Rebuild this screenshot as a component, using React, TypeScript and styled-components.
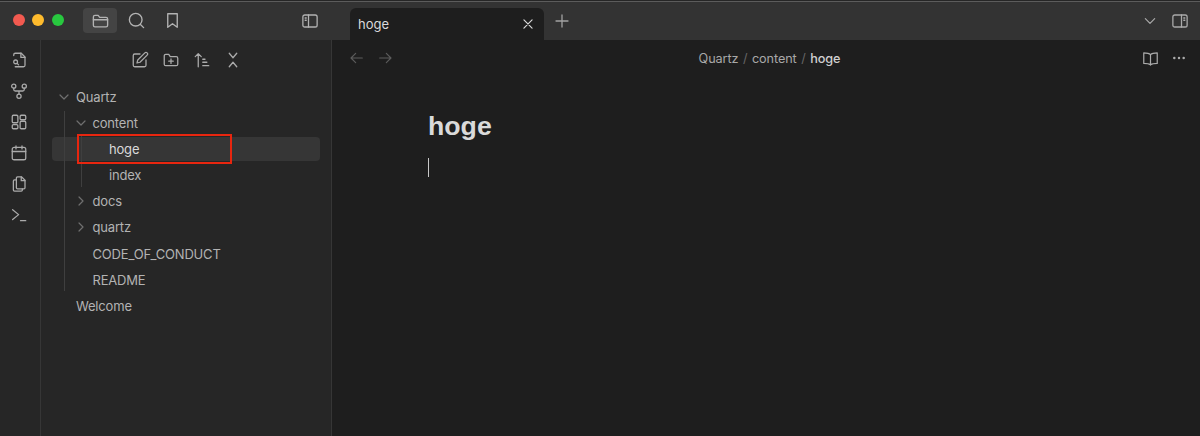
import styled, { createGlobalStyle } from 'styled-components'
import type { ReactNode } from 'react'

const GlobalStyle = createGlobalStyle`
  html, body {
    margin: 0;
    padding: 0;
    background: #1e1e1e;
  }
  * {
    box-sizing: border-box;
  }
`

const Icon = ({ size = 18, children }: { size?: number; children: ReactNode }) => (
  <svg
    width={size}
    height={size}
    viewBox="0 0 24 24"
    fill="none"
    stroke="currentColor"
    strokeWidth={size > 14 ? 1.7 : 2}
    strokeLinecap="round"
    strokeLinejoin="round"
  >
    {children}
  </svg>
)

const Chevron = ({ open }: { open: boolean }) => (
  <svg width="12" height="12" viewBox="0 0 12 12" fill="none" stroke="#6f6f6f" strokeWidth="1.2" strokeLinecap="round" strokeLinejoin="round">
    {open ? <path d="M2 4l4 4 4-4" /> : <path d="M4 2l4 4-4 4" />}
  </svg>
)

const Window = styled.div`
  width: 1200px;
  height: 436px;
  display: flex;
  flex-direction: column;
  overflow: hidden;
  background: #1e1e1e;
  font-family: Inter, "Liberation Sans", sans-serif;
`

const TitleBar = styled.header`
  height: 40px;
  flex: none;
  display: flex;
  align-items: flex-end;
  background: #333333;
  border-top: 1px solid #262626;
  box-shadow: inset 0 1px 0 #5c5c5c;
`

const TrafficLights = styled.div`
  display: flex;
  gap: 7.5px;
  padding: 0 0 14px 12.5px;
  align-self: flex-end;
`

const Light = styled.span<{ $color: string }>`
  width: 12px;
  height: 12px;
  border-radius: 50%;
  background: ${p => p.$color};
`

const TitleTools = styled.div`
  display: flex;
  align-items: center;
  gap: 2px;
  margin-left: 19.5px;
  padding-bottom: 7px;
`

const ToolButton = styled.div<{ $active?: boolean }>`
  width: 34px;
  height: 25px;
  display: flex;
  align-items: center;
  justify-content: center;
  border-radius: 4px;
  color: #b3b3b3;
  background: ${p => (p.$active ? '#444444' : 'transparent')};
`

const LayoutToggle = styled(ToolButton)`
  margin-left: 104px;
  margin-bottom: 7px;
`

const Tab = styled.div`
  width: 194px;
  height: 32px;
  margin-left: 23px;
  padding: 0 9px 0 8px;
  display: flex;
  align-items: center;
  justify-content: space-between;
  background: #1e1e1e;
  border-radius: 6px 6px 0 0;
  color: #dadada;
  font-size: 13px;
`

const TabClose = styled.span`
  display: flex;
  color: #dadada;
`

const NewTab = styled.div`
  width: 18px;
  height: 18px;
  margin: 0 0 10px 9px;
  color: #a3a3a3;
`

const TitleRight = styled.div`
  margin-left: auto;
  display: flex;
  align-items: center;
  gap: 14px;
  padding: 0 11px 10px 0;
  color: #ababab;
`

const Body = styled.div`
  flex: 1;
  display: flex;
  min-height: 0;
`

const Ribbon = styled.nav`
  width: 41px;
  flex: none;
  display: flex;
  flex-direction: column;
  align-items: center;
  gap: 13px;
  padding: 11px 2px 0 0;
  background: #262626;
  border-right: 1px solid #363636;
  color: #ababab;
`

const Sidebar = styled.aside`
  width: 291px;
  flex: none;
  position: relative;
  background: #262626;
  border-right: 1px solid #363636;
`

const SideTools = styled.div`
  height: 40px;
  padding-left: 90px;
  display: flex;
  align-items: center;
  gap: 13px;
  color: #ababab;
`

const Tree = styled.div`
  padding: 4.5px 11px 0 11px;
  position: relative;
`

const Row = styled.div<{ $depth: number; $selected?: boolean }>`
  height: 24px;
  margin-bottom: 2.2px;
  display: flex;
  align-items: center;
  gap: 6px;
  padding-left: ${p => 6 + p.$depth * 16.5}px;
  border-radius: 4px;
  font-size: 13px;
  letter-spacing: -0.18px;
  color: ${p => (p.$selected ? '#dadada' : '#b3b3b3')};
  background: ${p => (p.$selected ? '#363636' : 'transparent')};
`

const ChevronSlot = styled.span`
  width: 12px;
  flex: none;
  display: flex;
`

const Guide = styled.span<{ $left: number; $top: number; $height: number }>`
  position: absolute;
  left: ${p => p.$left}px;
  top: ${p => p.$top}px;
  width: 1px;
  height: ${p => p.$height}px;
  background: #3f3f3f;
`

const Highlight = styled.div`
  position: absolute;
  left: 36px;
  top: 94px;
  width: 155px;
  height: 30px;
  border: 2px solid #e8260f;
`

const Main = styled.main`
  flex: 1;
  display: flex;
  flex-direction: column;
  background: #1e1e1e;
`

const ViewHeader = styled.div`
  height: 36px;
  flex: none;
  display: flex;
  align-items: center;
  justify-content: space-between;
  padding: 0 13px 0 17px;
`

const NavArrows = styled.div`
  display: flex;
  gap: 12px;
  color: #5c5c5c;
`

const Crumbs = styled.div`
  display: flex;
  gap: 4.5px;
  margin-left: 4px;
  font-size: 12.7px;
  letter-spacing: -0.1px;
  color: #a8a8a8;
`

const CrumbSep = styled.span`
  color: #666666;
`

const CrumbCurrent = styled.span`
  color: #d0d0d0;
  font-weight: 500;
`

const ViewActions = styled.div`
  display: flex;
  align-items: center;
  gap: 12px;
  color: #ababab;
`

const Editor = styled.div`
  padding: 33px 0 0 96px;
`

const NoteTitle = styled.h1`
  margin: 0;
  font-family: "Liberation Sans", Arial, sans-serif;
  font-size: 26.7px;
  line-height: 34px;
  font-weight: 700;
  color: #dadada;
`

const Caret = styled.div`
  width: 1px;
  height: 19px;
  margin-top: 15px;
  background: #c8c8c8;
`

const PanelIcon = ({ right }: { right?: boolean }) => (
  <Icon size={18}>
    <rect x="2.5" y="4" width="19" height="16" rx="2.5" />
    <path d={right ? 'M14 4v16' : 'M10 4v16'} />
    {right ? <path d="M17 8h1.5M17 11h1.5" /> : <path d="M5.5 8h1.5M5.5 11h1.5" />}
  </Icon>
)

const App = () => (
  <>
    <GlobalStyle />
    <Window>
      <TitleBar>
        <TrafficLights>
          <Light $color="#f25a50" />
          <Light $color="#febb2d" />
          <Light $color="#28c83f" />
        </TrafficLights>
        <TitleTools>
          <ToolButton $active>
            <Icon size={19}>
              <path d="M3 7.5A2 2 0 0 1 5 5.5h4l2 2.5h8a2 2 0 0 1 2 2v8a2 2 0 0 1-2 2H5a2 2 0 0 1-2-2z" />
              <path d="M3 11h18" />
            </Icon>
          </ToolButton>
          <ToolButton>
            <Icon size={19}>
              <circle cx="11" cy="11" r="8" />
              <path d="M21 21l-4-4" />
            </Icon>
          </ToolButton>
          <ToolButton>
            <Icon size={19}>
              <path d="M6 3.5h12v17l-6-4.5-6 4.5z" />
            </Icon>
          </ToolButton>
        </TitleTools>
        <LayoutToggle>
          <PanelIcon />
        </LayoutToggle>
        <Tab>
          hoge
          <TabClose>
            <Icon size={14}>
              <path d="M5 5l14 14M19 5L5 19" />
            </Icon>
          </TabClose>
        </Tab>
        <NewTab>
          <Icon size={18}>
            <path d="M12 4v16M4 12h16" />
          </Icon>
        </NewTab>
        <TitleRight>
          <Icon size={14}>
            <path d="M4 8l8 8 8-8" />
          </Icon>
          <PanelIcon right />
        </TitleRight>
      </TitleBar>
      <Body>
        <Ribbon>
          <Icon size={18}>
            <path d="M5 6V5a2 2 0 0 1 2-2h8l5 5v11a2 2 0 0 1-2 2H7" />
            <path d="M14.500 3v5.500H20" />
            <circle cx="7.500" cy="14.500" r="2.500" />
            <path d="M9.500 16.500l2 2" />
          </Icon>
          <Icon size={18}>
            <circle cx="5" cy="5.500" r="2.800" />
            <circle cx="19" cy="5.500" r="2.800" />
            <circle cx="12" cy="19" r="2.800" />
            <path d="M5 8.300V10a2 2 0 0 0 2 2h10a2 2 0 0 0 2-2V8.300M12 12v4.200" />
          </Icon>
          <Icon size={18}>
            <rect x="3" y="3" width="7.500" height="10" rx="1.500" />
            <rect x="13.500" y="3" width="7.500" height="6" rx="1.500" />
            <rect x="13.500" y="11" width="7.500" height="10" rx="1.500" />
            <rect x="3" y="15.500" width="7.500" height="5.500" rx="1.500" />
          </Icon>
          <Icon size={18}>
            <rect x="3" y="4.500" width="18" height="16.500" rx="2.500" />
            <path d="M3 10h18M8 2.500v4M16 2.500v4" />
          </Icon>
          <Icon size={18}>
            <path d="M10 2.500h5.500L20 7v10a1.500 1.500 0 0 1-1.500 1.500H10A1.500 1.500 0 0 1 8.500 17V4A1.500 1.500 0 0 1 10 2.500z" />
            <path d="M15 2.500V7.500h5" />
            <path d="M8.500 6.500H6A1.500 1.500 0 0 0 4.500 8v12A1.500 1.500 0 0 0 6 21.500h9a1.500 1.500 0 0 0 1.500-1.500v-1.500" />
          </Icon>
          <Icon size={18}>
            <path d="M3.500 5l8 6.500-8 6.500M14 19.500h7" />
          </Icon>
        </Ribbon>
        <Sidebar>
          <SideTools>
            <Icon size={18}>
              <path d="M12 4H5a2 2 0 0 0-2 2v13a2 2 0 0 0 2 2h13a2 2 0 0 0 2-2v-7" />
              <path d="M18.500 2.500a2.100 2.100 0 0 1 3 3L12 15l-4 1 1-4z" />
            </Icon>
            <Icon size={18}>
              <path d="M3 6.500A2 2 0 0 1 5 4.500h4l2 3h8a2 2 0 0 1 2 2v8a2 2 0 0 1-2 2H5a2 2 0 0 1-2-2z" />
              <path d="M12 10.500v6M9 13.500h6" />
            </Icon>
            <Icon size={18}>
              <path d="M7 21V3.500M3 7.500l4-4 4 4M13 11h3M13 15h5.500M13 19.500h8" />
            </Icon>
            <Icon size={18}>
              <path d="M7 3l5 6 5-6M7 21l5-6 5 6" />
            </Icon>
          </SideTools>
          <Tree>
            <Guide $left={23} $top={31} $height={180} />
            <Guide $left={40} $top={55} $height={52} />
            <Row $depth={0}>
              <ChevronSlot><Chevron open /></ChevronSlot>
              Quartz
            </Row>
            <Row $depth={1}>
              <ChevronSlot><Chevron open /></ChevronSlot>
              content
            </Row>
            <Row $depth={2} $selected>
              <ChevronSlot />
              hoge
            </Row>
            <Row $depth={2}>
              <ChevronSlot />
              index
            </Row>
            <Row $depth={1}>
              <ChevronSlot><Chevron open={false} /></ChevronSlot>
              docs
            </Row>
            <Row $depth={1}>
              <ChevronSlot><Chevron open={false} /></ChevronSlot>
              quartz
            </Row>
            <Row $depth={1}>
              <ChevronSlot />
              CODE_OF_CONDUCT
            </Row>
            <Row $depth={1}>
              <ChevronSlot />
              README
            </Row>
            <Row $depth={0}>
              <ChevronSlot />
              Welcome
            </Row>
          </Tree>
          <Highlight />
        </Sidebar>
        <Main>
          <ViewHeader>
            <NavArrows>
              <Icon size={16}>
                <path d="M20 12H4M10 5l-7 7 7 7" />
              </Icon>
              <Icon size={16}>
                <path d="M4 12h16M14 5l7 7-7 7" />
              </Icon>
            </NavArrows>
            <Crumbs>
              <span>Quartz</span>
              <CrumbSep>/</CrumbSep>
              <span>content</span>
              <CrumbSep>/</CrumbSep>
              <CrumbCurrent>hoge</CrumbCurrent>
            </Crumbs>
            <ViewActions>
              <Icon size={17}>
                <path d="M12 6.500C10 4.500 7 4 2.500 4v15c4.500 0 7.500.5 9.500 2 2-1.500 5-2 9.500-2V4C17 4 14 4.500 12 6.500z" />
                <path d="M12 6.500V21" />
              </Icon>
              <Icon size={16}>
                <circle cx="5" cy="12" r="1" fill="currentColor" />
                <circle cx="12" cy="12" r="1" fill="currentColor" />
                <circle cx="19" cy="12" r="1" fill="currentColor" />
              </Icon>
            </ViewActions>
          </ViewHeader>
          <Editor>
            <NoteTitle>hoge</NoteTitle>
            <Caret />
          </Editor>
        </Main>
      </Body>
    </Window>
  </>
)

export default App
